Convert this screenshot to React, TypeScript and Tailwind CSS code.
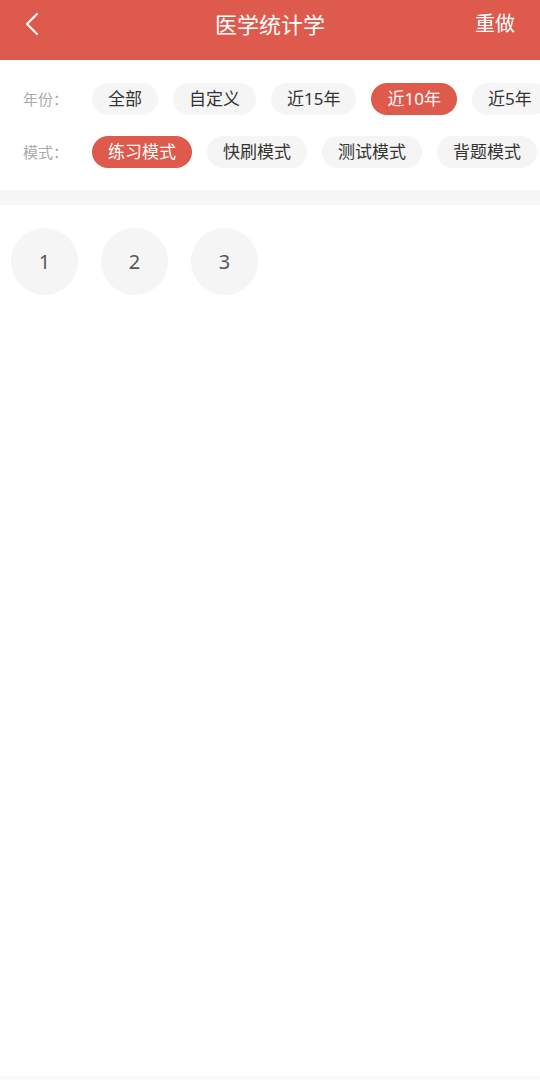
import { ChevronLeft } from "lucide-react";

const years = ["全部", "自定义", "近15年", "近10年", "近5年"];
const modes = ["练习模式", "快刷模式", "测试模式", "背题模式"];

function Chip({ label, active }: { label: string; active?: boolean }) {
  return (
    <span
      className={
        active
          ? "inline-flex h-[32px] shrink-0 items-center rounded-full bg-[#dd5a4c] px-[16px] text-[17px] text-white"
          : "inline-flex h-[32px] shrink-0 items-center rounded-full bg-[#f5f5f5] px-[16px] text-[17px] text-[#333]"
      }
    >
      {label}
    </span>
  );
}

function FilterRow({ title, items, activeIndex }: { title: string; items: string[]; activeIndex: number }) {
  return (
    <div className="flex items-center overflow-hidden whitespace-nowrap">
      <span className="w-[92px] shrink-0 pl-[23px] text-[15px] text-[#aaa]">{title}</span>
      <div className="flex gap-[15px]">
        {items.map((item, i) => (
          <Chip key={item} label={item} active={i === activeIndex} />
        ))}
      </div>
    </div>
  );
}

export default function App() {
  return (
    <div
      className="flex h-[1080px] w-[540px] flex-col overflow-hidden bg-white"
      style={{ fontFamily: '"Noto Sans", "Noto Sans CJK SC", sans-serif' }}
    >
      <header className="relative flex h-[60px] shrink-0 items-center justify-center bg-[#dd5a4c] pb-[12px] text-white">
        <ChevronLeft className="absolute left-[12px] top-[4px] h-[40px] w-[40px]" strokeWidth={1.3} />
        <h1 className="text-[22px] leading-none">医学统计学</h1>
        <span className="absolute right-[25px] top-[14px] text-[20px] leading-none">重做</span>
      </header>

      <section className="flex flex-col gap-[21px] pb-[22px] pt-[23px]">
        <FilterRow title="年份：" items={years} activeIndex={3} />
        <FilterRow title="模式：" items={modes} activeIndex={0} />
      </section>

      <div className="h-[15px] shrink-0 bg-[#f7f7f7]" />

      <div className="flex flex-1 gap-[23px] px-[11px] pt-[23px]">
        {[1, 2, 3].map((n) => (
          <div
            key={n}
            className="flex h-[67px] w-[67px] items-center justify-center rounded-full bg-[#f5f5f5] text-[20px] text-[#555]"
          >
            {n}
          </div>
        ))}
      </div>

      <div className="h-[4px] shrink-0 bg-[#fafafa]" />
    </div>
  );
}
